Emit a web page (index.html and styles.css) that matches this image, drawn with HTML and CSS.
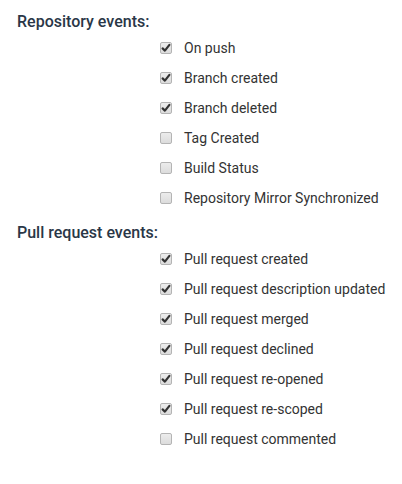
FILE: index.html
```html
<!DOCTYPE html>
<html lang="en">
<head>
    <meta charset="UTF-8">
    <meta name="viewport" content="width=device-width, initial-scale=1.0">
    <title>Webhook triggers</title>
    <link rel="stylesheet" href="styles.css">
</head>
<body>

<div class="triggers">
    <h3 class="group-title">Repository events:</h3>
    <ul class="event-list">
        <li class="event"><span class="box checked"><svg viewBox="0 0 12 12"><path d="M2.6 6.4 L4.9 8.6 L9.4 2.9"/></svg></span>On push</li>
        <li class="event"><span class="box checked"><svg viewBox="0 0 12 12"><path d="M2.6 6.4 L4.9 8.6 L9.4 2.9"/></svg></span>Branch created</li>
        <li class="event"><span class="box checked"><svg viewBox="0 0 12 12"><path d="M2.6 6.4 L4.9 8.6 L9.4 2.9"/></svg></span>Branch deleted</li>
        <li class="event"><span class="box"></span>Tag Created</li>
        <li class="event"><span class="box"></span>Build Status</li>
        <li class="event"><span class="box"></span>Repository Mirror Synchronized</li>
    </ul>

    <h3 class="group-title second">Pull request events:</h3>
    <ul class="event-list">
        <li class="event"><span class="box checked"><svg viewBox="0 0 12 12"><path d="M2.6 6.4 L4.9 8.6 L9.4 2.9"/></svg></span>Pull request created</li>
        <li class="event"><span class="box checked"><svg viewBox="0 0 12 12"><path d="M2.6 6.4 L4.9 8.6 L9.4 2.9"/></svg></span>Pull request description updated</li>
        <li class="event"><span class="box checked"><svg viewBox="0 0 12 12"><path d="M2.6 6.4 L4.9 8.6 L9.4 2.9"/></svg></span>Pull request merged</li>
        <li class="event"><span class="box checked"><svg viewBox="0 0 12 12"><path d="M2.6 6.4 L4.9 8.6 L9.4 2.9"/></svg></span>Pull request declined</li>
        <li class="event"><span class="box checked"><svg viewBox="0 0 12 12"><path d="M2.6 6.4 L4.9 8.6 L9.4 2.9"/></svg></span>Pull request re-opened</li>
        <li class="event"><span class="box checked"><svg viewBox="0 0 12 12"><path d="M2.6 6.4 L4.9 8.6 L9.4 2.9"/></svg></span>Pull request re-scoped</li>
        <li class="event"><span class="box"></span>Pull request commented</li>
    </ul>
</div>

</body>
</html>
```

FILE: styles.css
```css
body {
    font-family: Roboto, 'Liberation Sans', sans-serif;
    margin: 0;
    padding: 0;
    background-color: white;
    color: #333;
}

.triggers {
    padding: 11px 17px 0;
}

.group-title {
    margin: 0;
    font-size: 16px;
    font-weight: 500;
    line-height: 22px;
    color: #2a3747;
}

.group-title.second {
    margin-top: 9px;
}

.event-list {
    list-style: none;
    margin: 0;
    padding: 0 0 0 143px;
}

.event {
    display: flex;
    align-items: center;
    gap: 12px;
    height: 30px;
    font-size: 14px;
    white-space: nowrap;
}

.box {
    display: flex;
    align-items: center;
    justify-content: center;
    flex: none;
    width: 12px;
    height: 12px;
    box-sizing: border-box;
    border: 1px solid #b4b4b4;
    border-radius: 2px;
    background: linear-gradient(#ececec, #dcdcdc);
}

.box svg {
    width: 12px;
    height: 12px;
    flex: none;
}

.box svg path {
    fill: none;
    stroke: #333;
    stroke-width: 2.2;
    stroke-linecap: round;
    stroke-linejoin: round;
}
```
